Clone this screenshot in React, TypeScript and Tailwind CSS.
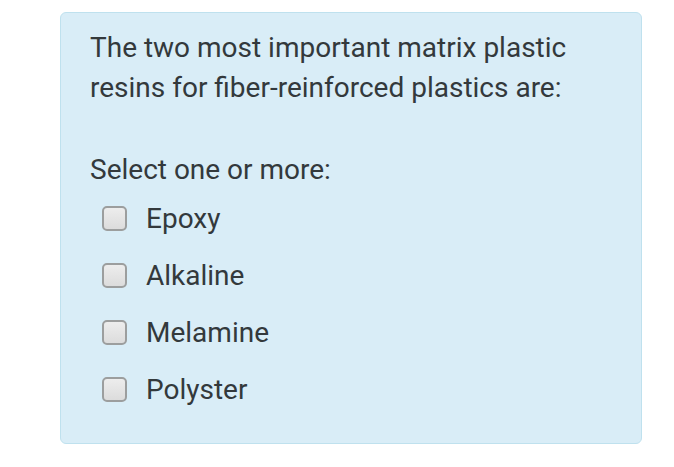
const options = ["Epoxy", "Alkaline", "Melamine", "Polyster"];

export default function App() {
  return (
    <div className="h-[467px] w-[674px] bg-white pl-[60px] pt-[12px]" style={{ fontFamily: "Roboto, sans-serif" }}>
      <div className="h-[432px] w-[582px] rounded-[6px] border border-[#bfe1ee] bg-[#d9edf7] pl-[29px] pt-[15px] text-[#33393c]">
        <p className="text-[28px] leading-[40px]">
          The two most important matrix plastic
          <br />
          resins for fiber-reinforced plastics are:
        </p>
        <p className="mt-[42px] text-[28px] leading-[40px]">Select one or more:</p>
        <div className="flex flex-col">
          {options.map((o) => (
            <label key={o} className="flex h-[57px] items-center gap-[19px] pl-[12px]">
              <span className="h-[25px] w-[25px] rounded-[5px] border-2 border-[#9c9e9e] bg-gradient-to-b from-[#ededed] to-[#dcdcdc]" />
              <span className="text-[28px] leading-[40px]">{o}</span>
            </label>
          ))}
        </div>
      </div>
    </div>
  );
}
